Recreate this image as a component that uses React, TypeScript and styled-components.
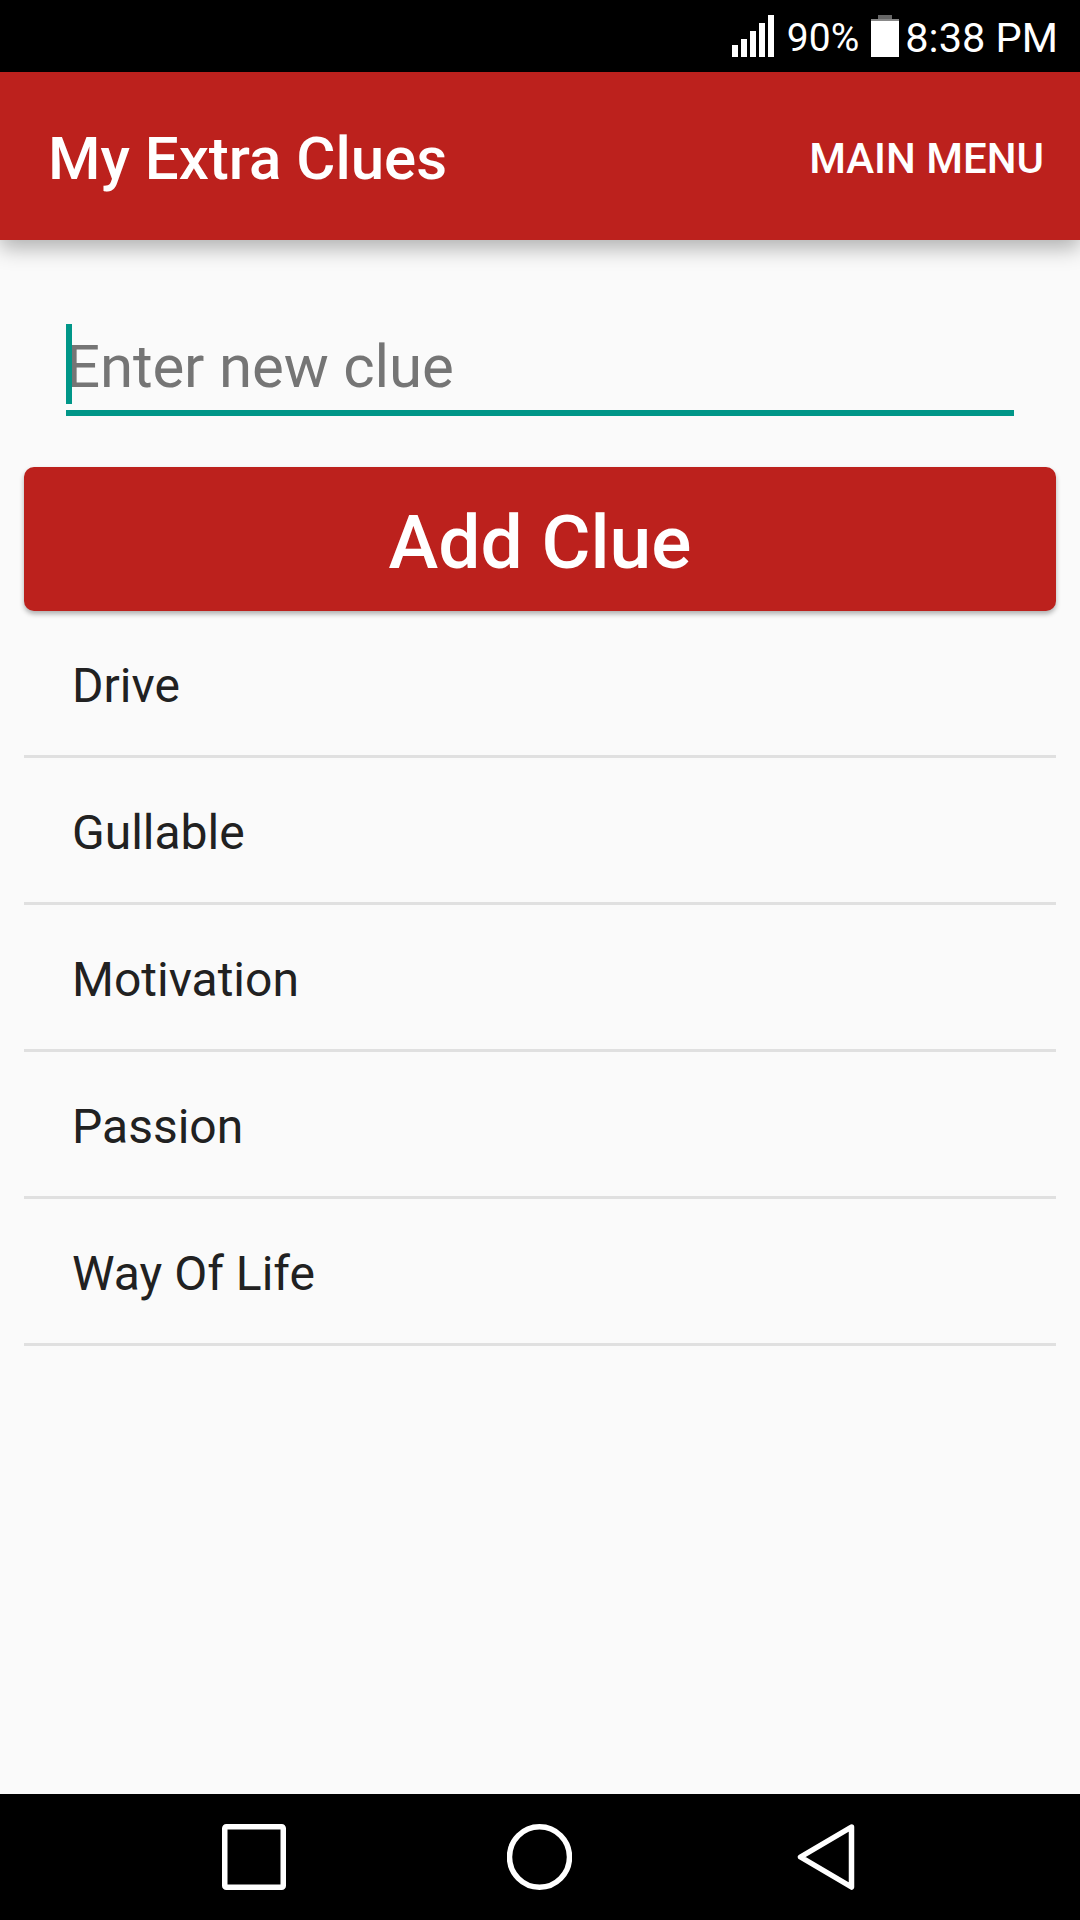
import React from "react";
import styled, { createGlobalStyle } from "styled-components";

const GlobalStyle = createGlobalStyle`
  html, body {
    margin: 0;
    padding: 0;
    background: #000;
  }
  * {
    box-sizing: border-box;
  }
`;

const Screen = styled.div`
  width: 1080px;
  height: 1920px;
  display: flex;
  flex-direction: column;
  overflow: hidden;
  background: #fafafa;
  font-family: Roboto, "Liberation Sans", sans-serif;
`;

const StatusBar = styled.div`
  height: 72px;
  flex: none;
  display: flex;
  justify-content: flex-end;
  align-items: flex-start;
  padding: 15px 22px 0 0;
  background: #000;
  color: #fff;
`;

const StatusText = styled.span<{ $left: number; $size?: number }>`
  margin-left: ${(p) => p.$left}px;
  padding-top: 2px;
  font-size: ${(p) => p.$size ?? 40}px;
  line-height: 42px;
  white-space: nowrap;
`;

const BatterySlot = styled.span`
  margin-left: 12px;
`;

const AppBar = styled.header`
  position: relative;
  z-index: 1;
  height: 168px;
  flex: none;
  display: flex;
  align-items: center;
  justify-content: space-between;
  padding: 4px 36px 0 48px;
  background: #bc211d;
  color: #fff;
  box-shadow: 0 8px 20px rgba(0, 0, 0, 0.3);
`;

const Title = styled.h1`
  margin: 0;
  font-size: 60px;
  font-weight: 500;
`;

const MenuAction = styled.span`
  font-size: 42px;
  font-weight: 500;
`;

const Content = styled.main`
  flex: 1;
  display: flex;
  flex-direction: column;
  padding: 84px 24px 0;
`;

const ClueField = styled.div`
  position: relative;
  height: 92px;
  margin: 0 42px;
  border-bottom: 6px solid #009688;
  color: #757575;
  font-size: 60px;
  letter-spacing: -0.15px;
  line-height: 86px;
`;

const Caret = styled.i`
  position: absolute;
  left: 0;
  top: 0;
  width: 6px;
  height: 80px;
  background: #009688;
`;

const AddButton = styled.button`
  height: 144px;
  margin-top: 51px;
  padding: 6px 0 0;
  border: 0;
  border-radius: 10px;
  background: #bc211d;
  color: #fff;
  font-family: inherit;
  font-size: 75px;
  font-weight: 500;
  box-shadow: 0 3px 5px rgba(0, 0, 0, 0.3);
`;

const ClueList = styled.ul`
  margin: 0;
  padding: 0;
  list-style: none;
`;

const ClueRow = styled.li`
  height: 147px;
  display: flex;
  align-items: center;
  padding: 4px 0 0 48px;
  border-bottom: 3px solid #e0e0e0;
  color: #212121;
  font-size: 48px;
`;

const NavBar = styled.nav`
  height: 126px;
  flex: none;
  display: flex;
  align-items: flex-start;
  padding: 30px 0 0 222px;
  background: #000;
`;

const NavIcon = styled.svg<{ $gap?: number }>`
  display: block;
  margin-left: ${(p) => p.$gap ?? 0}px;
  fill: none;
  stroke: #fff;
  stroke-width: 5.5;
  stroke-linejoin: round;
`;

const SignalIcon = () => (
  <svg width="42" height="42" viewBox="0 0 42 42" fill="#fff" style={{ display: "block" }}>
    <rect x="0" y="30" width="6" height="12" />
    <rect x="9" y="24" width="6" height="18" />
    <rect x="18" y="16" width="6" height="26" />
    <rect x="27" y="8" width="6" height="34" />
    <rect x="36" y="0" width="6" height="42" />
  </svg>
);

const BatteryIcon = () => (
  <svg width="28" height="42" viewBox="0 0 28 42" style={{ display: "block" }}>
    <rect x="7" y="0" width="14" height="5" fill="#666" />
    <rect x="0" y="4" width="28" height="2" fill="#888" />
    <rect x="0" y="6" width="28" height="36" fill="#fff" />
  </svg>
);

const clues = ["Drive", "Gullable", "Motivation", "Passion", "Way Of Life"];

export default function App() {
  return (
    <Screen>
      <GlobalStyle />
      <StatusBar>
        <SignalIcon />
        <StatusText $left={13} $size={39}>90%</StatusText>
        <BatterySlot>
          <BatteryIcon />
        </BatterySlot>
        <StatusText $left={6} $size={41.5}>8:38 PM</StatusText>
      </StatusBar>
      <AppBar>
        <Title>My Extra Clues</Title>
        <MenuAction>MAIN MENU</MenuAction>
      </AppBar>
      <Content>
        <ClueField>
          <Caret />
          Enter new clue
        </ClueField>
        <AddButton>Add Clue</AddButton>
        <ClueList>
          {clues.map((clue) => (
            <ClueRow key={clue}>{clue}</ClueRow>
          ))}
        </ClueList>
      </Content>
      <NavBar>
        <NavIcon width="64" height="66" viewBox="0 0 64 66">
          <rect x="2.75" y="2.75" width="58.5" height="60.5" rx="1.5" />
        </NavIcon>
        <NavIcon $gap={221} width="65" height="66" viewBox="0 0 65 66">
          <ellipse cx="32.5" cy="33" rx="30" ry="30.25" />
        </NavIcon>
        <NavIcon $gap={225} width="58" height="66" viewBox="0 0 58 66">
          <path d="M54.5 3 L3.5 33 L54.5 63 Z" />
        </NavIcon>
      </NavBar>
    </Screen>
  );
}
